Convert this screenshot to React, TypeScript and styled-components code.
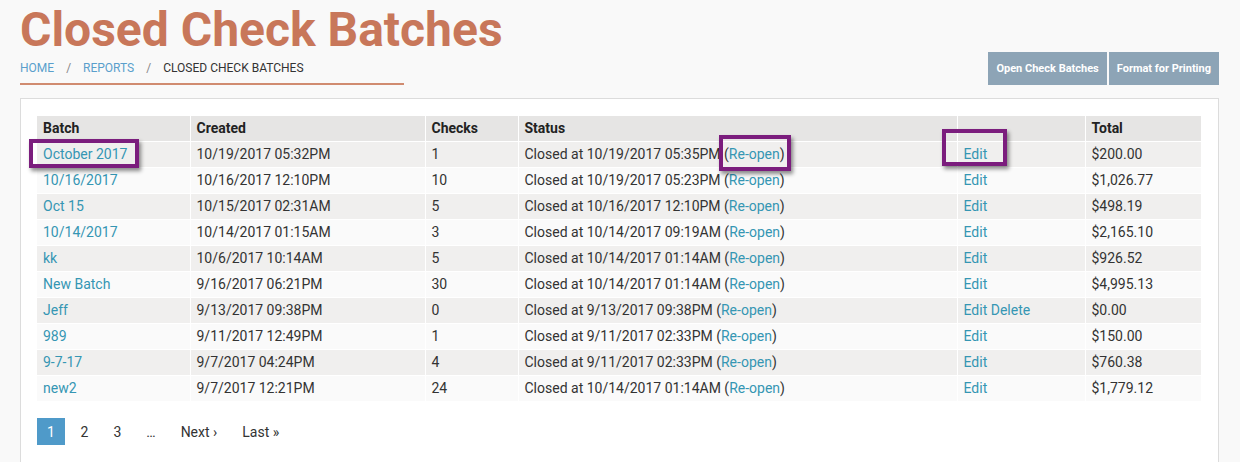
import { FC } from 'react';
import styled, { createGlobalStyle } from 'styled-components';

const GlobalStyle = createGlobalStyle`
  html, body {
    margin: 0;
    padding: 0;
    background: #f9f9f9;
    font-family: Roboto, 'Liberation Sans', Arial, sans-serif;
    color: #333;
  }
`;

const Page = styled.div`
  padding: 0 21px 0 20px;
  height: 462px;
  overflow: hidden;
`;

const HeaderBar = styled.div`
  display: flex;
  justify-content: space-between;
  align-items: flex-end;
  margin-bottom: 13px;
`;

const TitleBlock = styled.div`
  display: flex;
  flex-direction: column;
`;

const Title = styled.h1`
  margin: 0;
  padding-top: 3px;
  font-size: 48px;
  line-height: 54px;
  font-weight: 700;
  color: #c8775a;
`;

const Breadcrumb = styled.nav`
  display: flex;
  align-items: center;
  gap: 11px;
  font-size: 12px;
  line-height: 16px;
  text-transform: uppercase;
  padding: 3px 0 7px;
  width: 384px;
  border-bottom: 2px solid #d08b70;
`;

const Crumb = styled.span<{ current?: boolean }>`
  color: ${({ current }) => (current ? '#333' : '#5a9fcc')};
`;

const Sep = styled.span`
  color: #888;
  padding: 0 1px;
`;

const Buttons = styled.div`
  display: flex;
  gap: 2px;
`;

const ActionButton = styled.button`
  height: 33px;
  margin: 0;
  padding: 0 8px;
  border: none;
  background: #8da4b6;
  color: #fff;
  font-family: Roboto, 'Liberation Sans', Arial, sans-serif;
  font-weight: 700;
  font-size: 11px;
`;

const Card = styled.div`
  background: #fff;
  border: 1px solid #dcdcdc;
  padding: 17px 17px 40px 16px;
`;

const TableWrap = styled.div`
  position: relative;
`;

const Table = styled.table`
  width: 1164px;
  border-collapse: collapse;
  table-layout: fixed;
  font-size: 14px;
`;

const Th = styled.th<{ w: number }>`
  box-sizing: border-box;
  width: ${({ w }) => w}px;
  text-align: left;
  font-weight: 700;
  height: 25px;
  padding: 0 6px;
  background: #e6e5e4;
  border-left: 1px solid #fff;
  color: #222;
  &:first-child {
    border-left: none;
  }
`;

const Tr = styled.tr<{ odd: boolean }>`
  background: ${({ odd }) => (odd ? '#f0efee' : '#fafafa')};
`;

const Td = styled.td`
  box-sizing: border-box;
  height: 26px;
  padding: 0 6px;
  border-left: 1px solid #fff;
  border-top: 1px solid #fff;
  white-space: nowrap;
  &:first-child {
    border-left: none;
  }
`;

const Link = styled.a`
  color: #3596b3;
  text-decoration: none;
`;

const Highlight = styled.div<{ x: number; y: number; w: number; h: number }>`
  position: absolute;
  left: ${({ x }) => x}px;
  top: ${({ y }) => y}px;
  width: ${({ w }) => w}px;
  height: ${({ h }) => h}px;
  box-sizing: border-box;
  border: 4px solid #7b1d7d;
  box-shadow: 2px 3px 4px rgba(0, 0, 0, 0.45);
  pointer-events: none;
`;

const Pager = styled.div`
  display: flex;
  align-items: center;
  margin-top: 17px;
  font-size: 14px;
`;

const PageItem = styled.span<{ active?: boolean }>`
  display: flex;
  align-items: center;
  justify-content: center;
  height: 27px;
  width: ${({ active }) => (active ? '28px' : 'auto')};
  padding: 0 ${({ active }) => (active ? 0 : 12.5)}px;
  margin-right: ${({ active }) => (active ? 3 : 0)}px;
  background: ${({ active }) => (active ? '#4f9ac9' : 'transparent')};
  color: ${({ active }) => (active ? '#fff' : '#333')};
  box-sizing: border-box;
`;

type Row = {
  batch: string;
  created: string;
  checks: number;
  closed: string;
  del?: boolean;
  total: string;
};

const rows: Row[] = [
  { batch: 'October 2017', created: '10/19/2017 05:32PM', checks: 1, closed: '10/19/2017 05:35PM', total: '$200.00' },
  { batch: '10/16/2017', created: '10/16/2017 12:10PM', checks: 10, closed: '10/19/2017 05:23PM', total: '$1,026.77' },
  { batch: 'Oct 15', created: '10/15/2017 02:31AM', checks: 5, closed: '10/16/2017 12:10PM', total: '$498.19' },
  { batch: '10/14/2017', created: '10/14/2017 01:15AM', checks: 3, closed: '10/14/2017 09:19AM', total: '$2,165.10' },
  { batch: 'kk', created: '10/6/2017 10:14AM', checks: 5, closed: '10/14/2017 01:14AM', total: '$926.52' },
  { batch: 'New Batch', created: '9/16/2017 06:21PM', checks: 30, closed: '10/14/2017 01:14AM', total: '$4,995.13' },
  { batch: 'Jeff', created: '9/13/2017 09:38PM', checks: 0, closed: '9/13/2017 09:38PM', del: true, total: '$0.00' },
  { batch: '989', created: '9/11/2017 12:49PM', checks: 1, closed: '9/11/2017 02:33PM', total: '$150.00' },
  { batch: '9-7-17', created: '9/7/2017 04:24PM', checks: 4, closed: '9/11/2017 02:33PM', total: '$760.38' },
  { batch: 'new2', created: '9/7/2017 12:21PM', checks: 24, closed: '10/14/2017 01:14AM', total: '$1,779.12' },
];

const BatchRow: FC<{ row: Row; odd: boolean }> = ({ row, odd }) => (
  <Tr odd={odd}>
    <Td>
      <Link>{row.batch}</Link>
    </Td>
    <Td>{row.created}</Td>
    <Td>{row.checks}</Td>
    <Td>
      Closed at {row.closed} (<Link>Re-open</Link>)
    </Td>
    <Td>
      <Link>Edit</Link>
      {row.del && <Link> Delete</Link>}
    </Td>
    <Td>{row.total}</Td>
  </Tr>
);

export default function App() {
  return (
    <>
      <GlobalStyle />
      <Page>
        <HeaderBar>
          <TitleBlock>
            <Title>Closed Check Batches</Title>
            <Breadcrumb>
              <Crumb>Home</Crumb>
              <Sep>/</Sep>
              <Crumb>Reports</Crumb>
              <Sep>/</Sep>
              <Crumb current>Closed Check Batches</Crumb>
            </Breadcrumb>
          </TitleBlock>
          <Buttons>
            <ActionButton>Open Check Batches</ActionButton>
            <ActionButton>Format for Printing</ActionButton>
          </Buttons>
        </HeaderBar>
        <Card>
          <TableWrap>
            <Table>
              <thead>
                <tr>
                  <Th w={153}>Batch</Th>
                  <Th w={235}>Created</Th>
                  <Th w={93}>Checks</Th>
                  <Th w={439}>Status</Th>
                  <Th w={128}></Th>
                  <Th w={116}>Total</Th>
                </tr>
              </thead>
              <tbody>
                {rows.map((r, i) => (
                  <BatchRow key={r.batch} row={r} odd={i % 2 === 0} />
                ))}
              </tbody>
            </Table>
            <Highlight x={-8} y={23} w={110} h={29} />
            <Highlight x={682} y={19} w={72} h={36} />
            <Highlight x={905} y={13} w={65} h={37} />
          </TableWrap>
          <Pager>
            <PageItem active>1</PageItem>
            <PageItem>2</PageItem>
            <PageItem>3</PageItem>
            <PageItem>…</PageItem>
            <PageItem>Next ›</PageItem>
            <PageItem>Last »</PageItem>
          </Pager>
        </Card>
      </Page>
    </>
  );
}
